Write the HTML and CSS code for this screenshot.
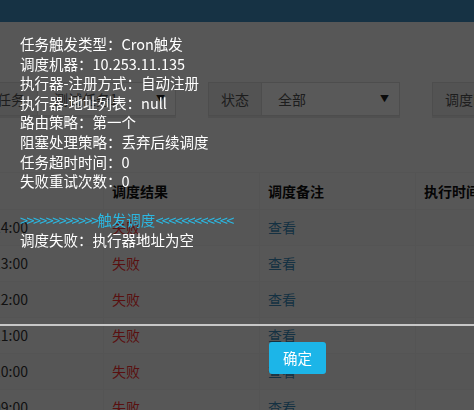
FILE: index.html
```html
<!DOCTYPE html>
<html lang="zh-CN">
<head>
    <meta charset="UTF-8">
    <meta name="viewport" content="width=device-width, initial-scale=1.0">
    <title>调度日志</title>
    <link rel="stylesheet" href="styles.css">
</head>
<body>
    <header class="main-header"></header>

    <div class="content-wrapper">
        <div class="filter-row">
            <div class="input-group">
                <span class="addon">任务</span>
                <div class="select">测试任务1<i class="caret">▼</i></div>
            </div>
            <div class="input-group">
                <span class="addon">状态</span>
                <div class="select">全部<i class="caret">▼</i></div>
            </div>
            <div class="input-group">
                <span class="addon">调度时间</span>
                <div class="select"></div>
            </div>
        </div>

        <table class="log-table">
            <thead>
                <tr><th></th><th>调度结果</th><th>调度备注</th><th>执行时间</th></tr>
            </thead>
            <tbody>
                <tr><td>14:00</td><td class="fail">失败</td><td><a href="#">查看</a></td><td></td></tr>
                <tr><td>13:00</td><td class="fail">失败</td><td><a href="#">查看</a></td><td></td></tr>
                <tr><td>12:00</td><td class="fail">失败</td><td><a href="#">查看</a></td><td></td></tr>
                <tr><td>11:00</td><td class="fail">失败</td><td><a href="#">查看</a></td><td></td></tr>
                <tr><td>10:00</td><td class="fail">失败</td><td><a href="#">查看</a></td><td></td></tr>
                <tr><td>09:00</td><td class="fail">失败</td><td><a href="#">查看</a></td><td></td></tr>
            </tbody>
        </table>
    </div>

    <!-- dialog for the trigger message -->
    <div class="layer-shade"></div>
    <div class="layer">
        <div class="layer-content">
            任务触发类型：Cron触发<br>
            调度机器：10.253.11.135<br>
            执行器-注册方式：自动注册<br>
            执行器-地址列表：null<br>
            路由策略：第一个<br>
            阻塞处理策略：丢弃后续调度<br>
            任务超时时间：0<br>
            失败重试次数：0<br>
            <br>
            <span class="trigger-title">&gt;&gt;&gt;&gt;&gt;&gt;&gt;&gt;&gt;&gt;&gt;&gt;<span>触发调度</span>&lt;&lt;&lt;&lt;&lt;&lt;&lt;&lt;&lt;&lt;&lt;&lt;</span><br>
            调度失败：执行器地址为空
        </div>
        <div class="layer-btn">
            <a class="btn" href="#">确定</a>
        </div>
    </div>
</body>
</html>
```

FILE: styles.css
```css
body {
    margin: 0;
    padding: 0;
    background-color: #fafafa;
    font-family: "Noto Sans CJK SC", sans-serif;
    font-size: 14px;
    color: #333;
    overflow: hidden;
}

.main-header {
    height: 22px;
    background-color: #3f8fc2;
}

/* page is scrolled a little to the right */
.content-wrapper {
    margin-left: -16px;
    padding-top: 60px;
}

.filter-row {
    display: flex;
    gap: 32px;
}

.input-group {
    display: flex;
    width: 192px;
    height: 34px;
    flex-shrink: 0;
    box-sizing: border-box;
    border: 1px solid #ddd;
    box-shadow: 0 2px 0 rgba(0, 0, 0, 0.08);
}

.addon {
    padding: 0 12px;
    line-height: 32px;
    background-color: #eee;
    border-right: 1px solid #ddd;
    color: #555;
    white-space: nowrap;
}

.select {
    flex: 1;
    display: flex;
    justify-content: space-between;
    padding: 0 10px 0 16px;
    line-height: 32px;
    background-color: #fff;
    color: #555;
}

.caret {
    font-style: normal;
    font-size: 9px;
    color: #222;
}

.log-table {
    margin-top: 56px;
    border-collapse: collapse;
    table-layout: fixed;
    width: 700px;
}

.log-table th,
.log-table td {
    padding: 8px;
    line-height: 20px;
    text-align: left;
    border: 1px solid #f0f0f0;
    white-space: nowrap;
}

.log-table th:nth-child(1) { width: 102px; }
.log-table th:nth-child(2) { width: 139px; }
.log-table th:nth-child(3) { width: 139px; }

.log-table tbody tr:nth-child(odd) {
    background-color: #f6f6f6;
}

.log-table th {
    font-weight: bold;
    color: #111;
}

.log-table td {
    padding-top: 7px;
    padding-bottom: 8px;
}

.log-table td a {
    color: #3c8dbc;
    text-decoration: none;
}

.fail {
    color: #ff3030;
}

.layer-shade {
    position: fixed;
    top: 0;
    left: 0;
    right: 0;
    bottom: 0;
    background-color: rgba(0, 0, 0, 0.65);
}

.layer {
    position: absolute;
    top: 0;
    left: 0;
    right: 0;
    color: #fff;
}

.layer-content {
    height: 324px;
    box-sizing: border-box;
    padding: 34px 20px 0;
    font-size: 14.5px;
    line-height: 19.6px;
}

.trigger-title {
    color: #2bb8e2;
    letter-spacing: -1.6px;
}

.trigger-title span {
    letter-spacing: 0;
}

.layer-btn {
    border-top: 2px solid #c8c8c8;
    padding: 16px 0 0 269px;
}

.btn {
    display: inline-block;
    width: 57px;
    height: 32px;
    line-height: 32px;
    text-align: center;
    background-color: #1cb5e8;
    color: #fff;
    border-radius: 3px;
    text-decoration: none;
    font-size: 14.5px;
}
```
